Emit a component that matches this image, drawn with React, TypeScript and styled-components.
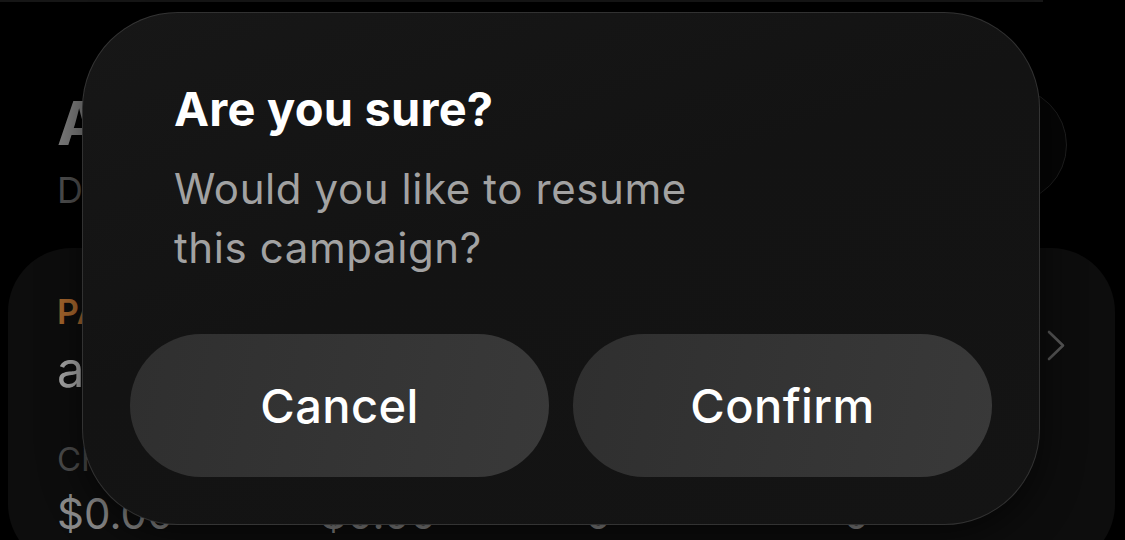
import React from "react";
import styled, { createGlobalStyle } from "styled-components";

const GlobalStyle = createGlobalStyle`
  html, body {
    margin: 0;
    padding: 0;
    background: #000;
  }
  body {
    font-family: Inter, "Noto Sans", "Liberation Sans", sans-serif;
    -webkit-font-smoothing: antialiased;
  }
`;

const Screen = styled.div`
  position: relative;
  width: 1125px;
  height: 540px;
  overflow: hidden;
  background: #000;
`;

const TopEdge = styled.div`
  width: 1043px;
  height: 2px;
  background: #161616;
`;

const Header = styled.div`
  display: flex;
  justify-content: space-between;
  align-items: flex-start;
  padding: 85px 58px 0 57px;
  height: 159px;
  box-sizing: border-box;
`;

const HeaderText = styled.div`
  display: flex;
  flex-direction: column;
`;

const PageTitle = styled.div`
  font-size: 60px;
  line-height: 72px;
  font-weight: 700;
  color: #7f7f7f;
  white-space: nowrap;
`;

const PageSubtitle = styled.div`
  margin-top: 9px;
  font-size: 36px;
  line-height: 44px;
  color: #4f4f4f;
  white-space: nowrap;
`;

const Avatar = styled.div`
  width: 114px;
  height: 114px;
  border-radius: 50%;
  background: #060606;
  border: 1px solid #1e1e1e;
`;

const Card = styled.div`
  margin: 87px 10px 0 8px;
  height: 320px;
  border-radius: 64px;
  background: #0d0d0d;
  padding: 44px 50px 0 49px;
  box-sizing: border-box;
`;

const CardTop = styled.div`
  display: flex;
  align-items: center;
  justify-content: space-between;
`;

const CardMain = styled.div`
  display: flex;
  flex-direction: column;
`;

const Status = styled.div`
  font-size: 34px;
  line-height: 40px;
  font-weight: 600;
  color: #a5652c;
  letter-spacing: 0.5px;
`;

const CampaignName = styled.div`
  margin-top: 9px;
  font-size: 49px;
  line-height: 58px;
  color: #a8a8a8;
`;

const ChevronIcon = styled.svg`
  flex: none;
  display: block;
`;

const StatLabel = styled.div`
  margin-top: 40px;
  font-size: 33px;
  line-height: 40px;
  color: #4a4a4a;
`;

const StatRow = styled.div`
  display: grid;
  grid-template-columns: 263px 265px 258px 1fr;
  margin-top: 10px;
`;

const StatValue = styled.div`
  font-size: 42px;
  line-height: 50px;
  color: #8a8a8a;
`;

const Dialog = styled.div`
  position: absolute;
  left: 82px;
  top: 12px;
  width: 958px;
  height: 513px;
  box-sizing: border-box;
  border-radius: 96px;
  background: linear-gradient(160deg, #171717 0%, #131313 45%, #141414 100%);
  border: 1.5px solid rgba(255, 255, 255, 0.13);
  box-shadow: 0 10px 40px rgba(0, 0, 0, 0.6);
  padding: 68px 47px 47px;
  display: flex;
  flex-direction: column;
`;

const DialogText = styled.div`
  padding-left: 44px;
  display: flex;
  flex-direction: column;
`;

const DialogTitle = styled.div`
  font-size: 47px;
  line-height: 56px;
  font-weight: 700;
  color: #fff;
  letter-spacing: 0.2px;
`;

const DialogBody = styled.div`
  margin-top: 22px;
  font-size: 42px;
  line-height: 59px;
  color: #a2a2a2;
  letter-spacing: 0.6px;
  max-width: 560px;
`;

const Actions = styled.div`
  margin-top: auto;
  display: grid;
  grid-template-columns: 1fr 1fr;
  gap: 24px;
`;

const ActionButton = styled.button`
  height: 143px;
  border: none;
  border-radius: 72px;
  background: linear-gradient(100deg, #2f2f2f 0%, #353535 60%, #393939 100%);
  color: #fff;
  font-family: inherit;
  font-size: 47px;
  line-height: 1;
  font-weight: 500;
  letter-spacing: 0.4px;
  display: flex;
  align-items: center;
  justify-content: center;
  padding: 0 0 0 0;
  cursor: pointer;
`;

export default function App() {
  return (
    <>
      <GlobalStyle />
      <Screen>
        <TopEdge />
        <Header>
          <HeaderText>
            <PageTitle>Ad Campaigns</PageTitle>
            <PageSubtitle>Drafts and active ads</PageSubtitle>
          </HeaderText>
          <Avatar />
        </Header>
        <Card>
          <CardTop>
            <CardMain>
              <Status>PAUSED</Status>
              <CampaignName>ad campaign</CampaignName>
            </CardMain>
            <ChevronIcon width="18" height="31" viewBox="0 0 18 31" fill="none">
              <polyline
                points="2,2 16,15.5 2,29"
                stroke="#555"
                strokeWidth="2.6"
                strokeLinecap="round"
                strokeLinejoin="round"
              />
            </ChevronIcon>
          </CardTop>
          <StatLabel>CHARGED</StatLabel>
          <StatRow>
            <StatValue>$0.00</StatValue>
            <StatValue>$0.00</StatValue>
            <StatValue>0</StatValue>
            <StatValue>0</StatValue>
          </StatRow>
        </Card>

        <Dialog role="alertdialog">
          <DialogText>
            <DialogTitle>Are you sure?</DialogTitle>
            <DialogBody>Would you like to resume this campaign?</DialogBody>
          </DialogText>
          <Actions>
            <ActionButton>Cancel</ActionButton>
            <ActionButton>Confirm</ActionButton>
          </Actions>
        </Dialog>
      </Screen>
    </>
  );
}
